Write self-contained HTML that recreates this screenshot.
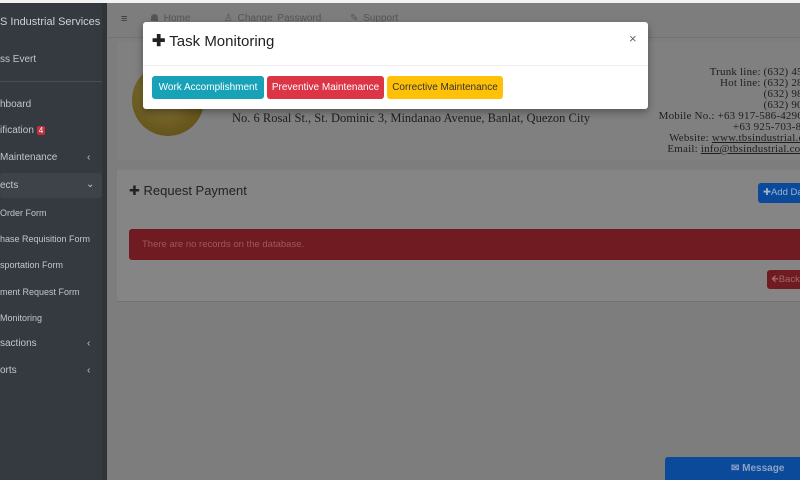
<!DOCTYPE html>
<html><head><meta charset="utf-8"><style>
*{margin:0;padding:0;box-sizing:border-box}
html,body{width:800px;height:480px;overflow:hidden}
body{background:#7d7d7d;font-family:"Liberation Sans",sans-serif;position:relative}
.abs{position:absolute}
.sb{left:0;top:3px;width:107px;height:477px;background:#353a41;border-right:5px solid #2f3436}
.sb div{position:absolute;color:#c4c6c8;font-size:10px;white-space:nowrap}
.top{left:0;top:0;width:800px;height:3px;background:#f2f2f2}
.ser{font-family:"Liberation Serif",serif;color:#1e1e1e}
.btn{position:absolute;height:23px;border-radius:3px;font-size:10px;line-height:23px;text-align:center}
</style></head><body>
<div class="abs top"></div>
<div class="abs sb">
<div style="left:0;top:13px;font-size:11px;color:#cfd1d3">S Industrial Services</div>
<div style="left:0;top:78px;width:102px;height:1px;background:#4a4f55"></div>
<div style="left:0;top:51px;font-size:10px">ss Evert</div>
<div style="left:0;top:96px">hboard</div>
<div style="left:0;top:122px">ification <span style="background:#c0303f;color:#fff;font-size:8px;padding:0 2px;border-radius:2px">4</span></div>
<div style="left:0;top:149px">Maintenance</div><div style="left:87px;top:149px">‹</div>
<div style="left:0;top:170px;width:102px;height:25px;background:#3e434a;border-radius:3px"></div>
<div style="left:0;top:177px">ects</div><div style="left:86px;top:176px">⌄</div>
<div style="left:0;top:205px;font-size:9px">Order Form</div>
<div style="left:0;top:231px;font-size:9px">hase Requisition Form</div>
<div style="left:0;top:257px;font-size:9px">sportation Form</div>
<div style="left:0;top:284px;font-size:9px">ment Request Form</div>
<div style="left:0;top:310px;font-size:9px">Monitoring</div>
<div style="left:0;top:335px">sactions</div><div style="left:87px;top:335px">‹</div>
<div style="left:0;top:362px">orts</div><div style="left:87px;top:362px">‹</div>
</div>
<div class="abs" style="left:107px;top:37px;width:693px;height:1px;background:#737373"></div>
<div class="abs" style="left:121px;top:13px;color:#333;font-size:11px">≡</div>
<div class="abs" style="left:150px;top:13px;color:#555;font-size:10px;word-spacing:2px">☗ Home &nbsp;&nbsp;&nbsp;&nbsp;&nbsp; ♙ Change Password &nbsp;&nbsp;&nbsp;&nbsp; ✎ Support</div>
<div class="abs" style="left:117px;top:42px;width:683px;height:118px;background:#808080"></div>
<div class="abs" style="left:132px;top:64px;width:72px;height:72px;border-radius:50%;background:radial-gradient(circle at 45% 40%,#8a7a3a,#6a5a20 60%,#5a4a18)"></div>
<div class="abs ser" style="left:232px;top:111px;font-size:12.5px">No. 6 Rosal St., St. Dominic 3, Mindanao Avenue, Banlat, Quezon City</div>
<div class="abs ser" style="left:590px;top:67px;width:228px;font-size:11px;line-height:11px;text-align:right;white-space:nowrap;letter-spacing:0.2px">
Trunk line: (632) 453-3<br>Hot line: (632) 281-3<br>(632) 984-3<br>(632) 903-3<br>Mobile No.: +63 917-586-4290 (G<br>+63 925-703-8116 <br>Website: <u>www.tbsindustrial.com</u><br>Email: <u>info@tbsindustrial.com</u>&nbsp;&nbsp;&nbsp;</div>
<div class="abs" style="left:117px;top:170px;width:683px;height:132px;background:#858585;border-bottom:1px solid #727272"></div>
<div class="abs" style="left:129px;top:183px;font-size:13px;color:#222">✚ Request Payment</div>
<div class="abs" style="left:758px;top:183px;width:50px;height:20px;background:#0b4a9a;border-radius:3px;color:#9fb3cf;font-size:9.5px;line-height:20px;padding-left:5px">✚Add Dat</div>
<div class="abs" style="left:129px;top:229px;width:680px;height:31px;background:#701b22;border-radius:3px;color:#9a5a5f;font-size:9.5px;line-height:31px;padding-left:13px">There are no records on the database.</div>
<div class="abs" style="left:767px;top:270px;width:40px;height:19px;background:#701b22;border-radius:3px;color:#a0676b;font-size:9.5px;line-height:19px;padding-left:4px">🡸Back</div>
<div class="abs" style="left:665px;top:457px;width:140px;height:30px;background:#0b4a9a;border-radius:3px;color:#8ea3c4;font-size:10px;line-height:23px;padding-left:66px;font-weight:bold">✉ Message</div>
<div class="abs" style="left:143px;top:22px;width:505px;height:87px;background:#fff;border-radius:3px;box-shadow:0 3px 8px rgba(0,0,0,.35)">
<div class="abs" style="left:9px;top:9px;font-size:15px;color:#222"><b style="font-size:16px">✚</b> Task Monitoring</div>
<div class="abs" style="left:486px;top:9px;font-size:13px;color:#666">×</div>
<div class="abs" style="left:0;top:43px;width:505px;height:1px;background:#eee"></div>
<div class="btn" style="left:9px;top:54px;width:112px;background:#17a2b8;color:#fff">Work Accomplishment</div>
<div class="btn" style="left:124px;top:54px;width:117px;background:#dc3545;color:#fff">Preventive Maintenance</div>
<div class="btn" style="left:244px;top:54px;width:116px;background:#ffc107;color:#333">Corrective Maintenance</div>
</div>
</body></html>
